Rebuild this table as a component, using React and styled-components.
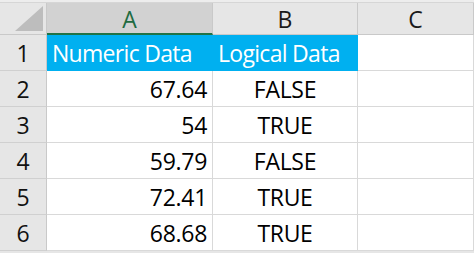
import React from "react";
import styled, { createGlobalStyle } from "styled-components";

const GlobalStyle = createGlobalStyle`
  html, body {
    margin: 0;
    padding: 0;
    background: #fff;
  }
  body {
    font-family: "Open Sans", "Liberation Sans", sans-serif;
  }
`;

const Sheet = styled.div`
  width: 474px;
  height: 253px;
  overflow: hidden;
  background: #e6e6e6;
`;

const TopStrip = styled.div`
  height: 3px;
  background: #ededed;
  border-bottom: 1px solid #d6d6d6;
  box-sizing: border-box;
`;

const Grid = styled.div`
  display: grid;
  grid-template-columns: 47px 166px 145px 116px;
  grid-template-rows: 32px repeat(6, 36px);
`;

const Corner = styled.div`
  background: #e6e6e6;
  border-right: 1px solid #c9c9c9;
  border-bottom: 1px solid #c9c9c9;
  box-sizing: border-box;
  display: flex;
  align-items: flex-end;
  justify-content: flex-end;
  padding: 0 3px 3px 0;
`;

const ColHead = styled.div`
  background: ${(p) => (p.$active ? "#d2d2d2" : "#e6e6e6")};
  color: ${(p) => (p.$active ? "#1e6b41" : "#1a1a1a")};
  border-right: 1px solid #c9c9c9;
  border-bottom: ${(p) => (p.$active ? "2px solid #217346" : "1px solid #c9c9c9")};
  box-sizing: border-box;
  display: flex;
  align-items: center;
  justify-content: center;
  font-size: 23px;
  padding-top: 1px;
`;

const RowHead = styled.div`
  background: #e6e6e6;
  color: #111;
  border-right: 1px solid #c9c9c9;
  border-bottom: 1px solid #d0d0d0;
  box-sizing: border-box;
  display: flex;
  align-items: center;
  justify-content: center;
  font-size: 23px;
`;

const Cell = styled.div`
  background: ${(p) => (p.$head ? "#00b0f0" : "#fff")};
  color: ${(p) => (p.$head ? "#fff" : "#000")};
  border-right: 1px solid ${(p) => (p.$head ? "#00b0f0" : "#d9d9d9")};
  border-bottom: 1px solid ${(p) => (p.$head ? "#00b0f0" : "#d9d9d9")};
  box-sizing: border-box;
  display: flex;
  align-items: center;
  justify-content: ${(p) =>
    p.$align === "right" ? "flex-end" : p.$align === "center" ? "center" : "flex-start"};
  padding: 0 5px;
  font-size: 23px;
  letter-spacing: ${(p) => (p.$head ? "-0.7px" : "-0.3px")};
  white-space: nowrap;
`;

const rows = [
  ["67.64", "FALSE"],
  ["54", "TRUE"],
  ["59.79", "FALSE"],
  ["72.41", "TRUE"],
  ["68.68", "TRUE"],
];

export default function App() {
  return (
    <Sheet>
      <GlobalStyle />
      <TopStrip />
      <Grid>
        <Corner>
          <svg width="28" height="25" viewBox="0 0 28 25">
            <polygon points="28,0 28,25 0,25" fill="#bdbdbd" />
          </svg>
        </Corner>
        <ColHead $active>A</ColHead>
        <ColHead>B</ColHead>
        <ColHead>C</ColHead>

        <RowHead>1</RowHead>
        <Cell $head>Numeric Data</Cell>
        <Cell $head>Logical Data</Cell>
        <Cell />

        {rows.map((r, i) => (
          <React.Fragment key={i}>
            <RowHead>{i + 2}</RowHead>
            <Cell $align="right">{r[0]}</Cell>
            <Cell $align="center">{r[1]}</Cell>
            <Cell />
          </React.Fragment>
        ))}
      </Grid>
    </Sheet>
  );
}
